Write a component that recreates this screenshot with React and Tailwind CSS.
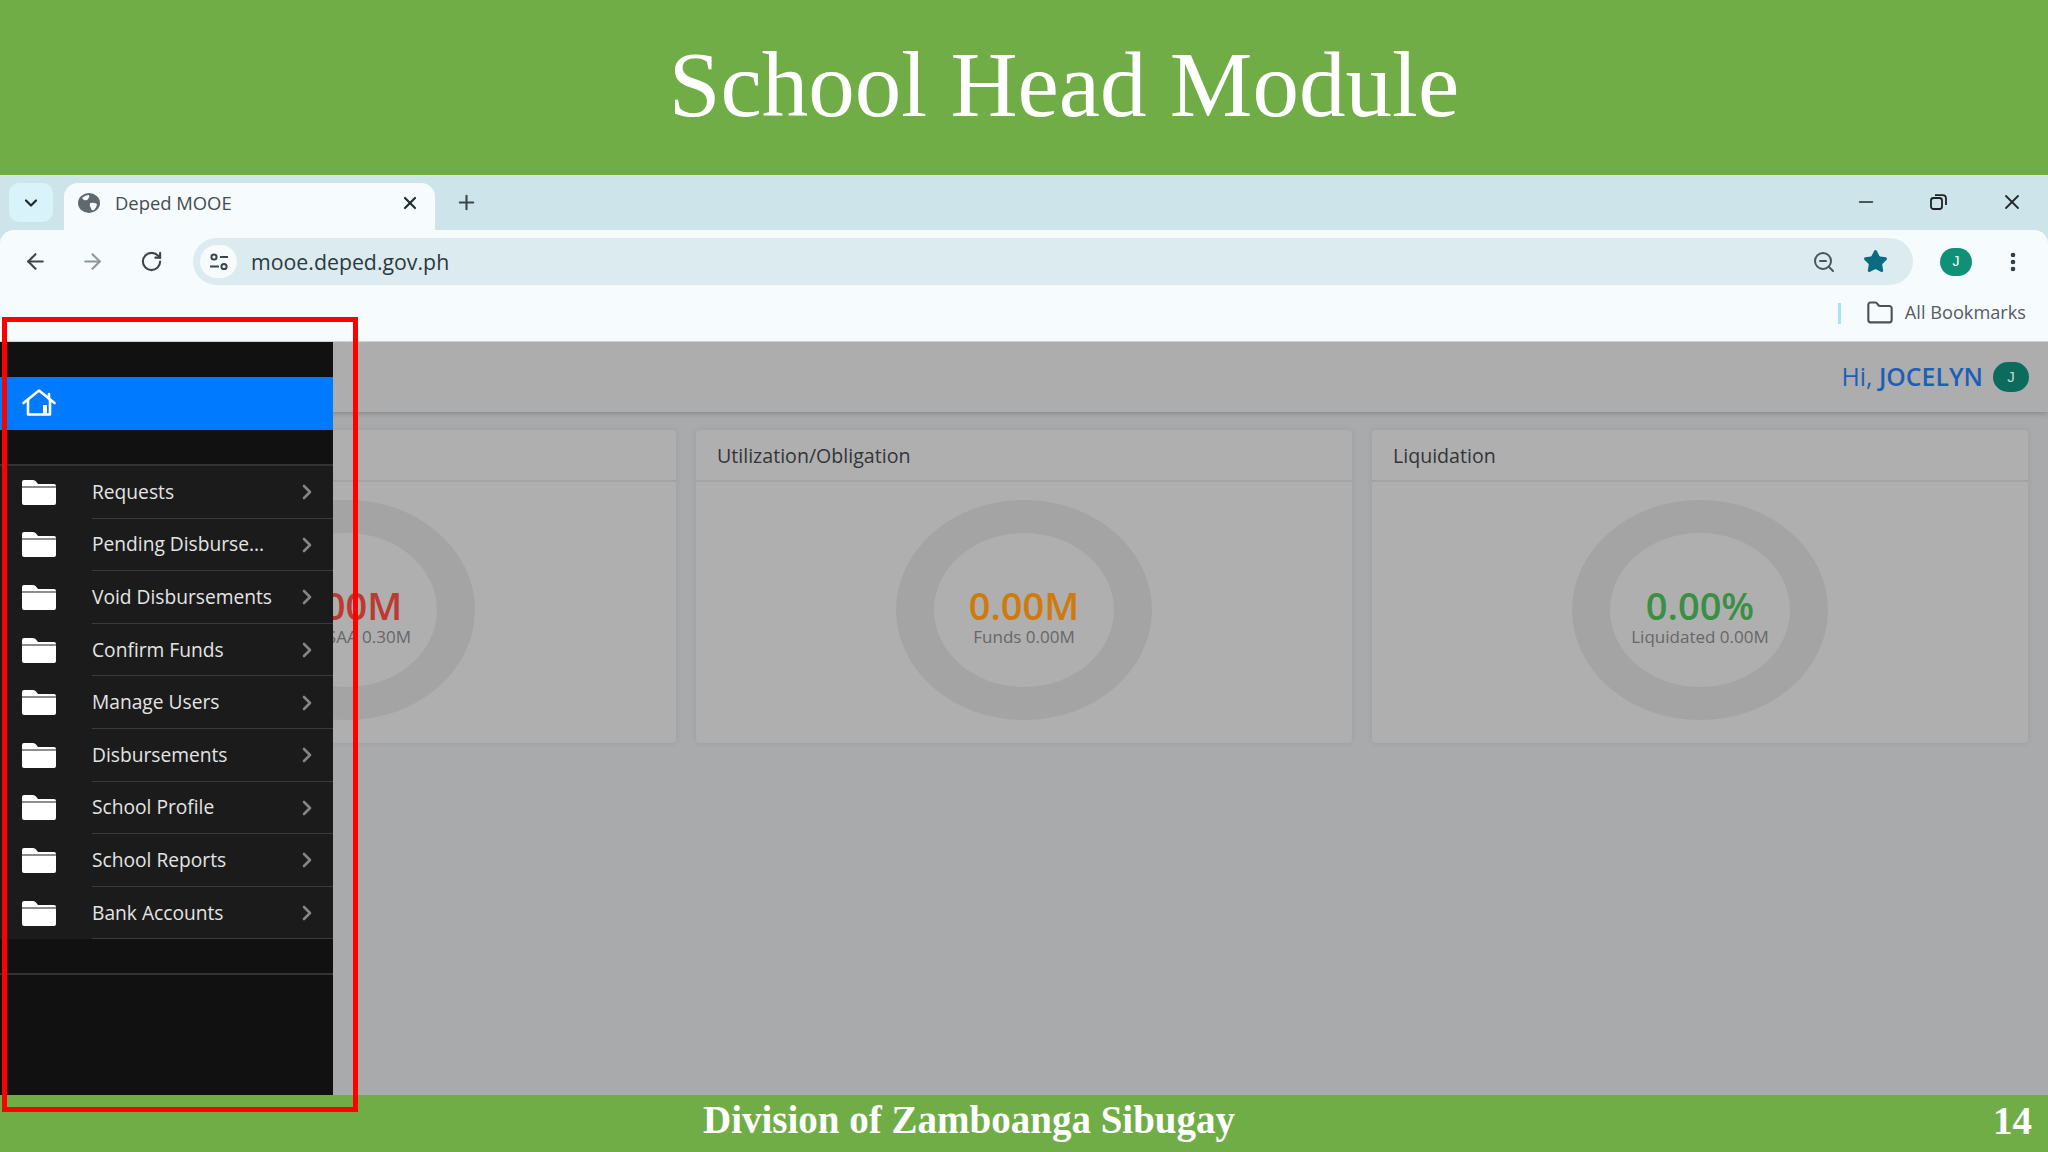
import { ArrowLeft, ArrowRight, RotateCw, Plus, X, ChevronDown, ChevronRight, ZoomOut, Star, EllipsisVertical, Minus, Folder } from "lucide-react";

const menuItems = ["Requests", "Pending Disburse...", "Void Disbursements", "Confirm Funds", "Manage Users", "Disbursements", "School Profile", "School Reports", "Bank Accounts"];

const cards = [
  { title: "Budget", value: "0.00M", sub: "Total SAA 0.30M", color: "text-[#bb3a31]", width: "w-[658px]" },
  { title: "Utilization/Obligation", value: "0.00M", sub: "Funds 0.00M", color: "text-[#d07a0c]", width: "w-[656px]" },
  { title: "Liquidation", value: "0.00%", sub: "Liquidated 0.00M", color: "text-[#3a8f45]", width: "w-[656px]" },
];

function FolderIcon() {
  return (
    <svg width="34" height="25" viewBox="0 0 34 25" className="shrink-0">
      <path d="M0 5V2q0-2 2-2h9q2 0 3 1.5L16 4h16q2 0 2 2v0.5H0z" fill="#fff" />
      <path d="M0 7.5h34V23q0 2-2 2H2q-2 0-2-2z" fill="#fff" />
    </svg>
  );
}

function HomeIcon() {
  return (
    <svg width="34" height="28" viewBox="0 0 34 28" fill="none" stroke="#fff" strokeWidth="2.6" strokeLinejoin="round" strokeLinecap="round">
      <path d="M1.5 14 17 1.5 32.5 14" />
      <path d="M27 5v5" />
      <path d="M6 11v14.5h22V11" />
      <rect x="21" y="16" width="4" height="9" fill="#fff" stroke="none" />
    </svg>
  );
}

function GlobeIcon() {
  return (
    <svg width="22" height="20" viewBox="0 0 22 20" className="shrink-0">
      <ellipse cx="11" cy="10" rx="11" ry="10" fill="#5f6a6e" />
      <path d="M4 5q3-3 7-3 1 2-1 4-1 2-4 1zM12 10q4-1 7 1 0 3-3 6-3 1-3-2-2-2-1-5z" fill="#f6fbfe" />
    </svg>
  );
}

function SliderIcon() {
  return (
    <svg width="20" height="18" viewBox="0 0 20 18" fill="none" stroke="#37474c" strokeWidth="2">
      <circle cx="5" cy="4" r="2.6" />
      <path d="M11 4h8M1 13.5h9" />
      <circle cx="15" cy="13.5" r="2.6" />
    </svg>
  );
}

function RestoreIcon() {
  return (
    <svg width="17" height="16" viewBox="0 0 17 16" fill="none" stroke="#1c2325" strokeWidth="1.8">
      <rect x="1" y="4" width="11" height="11" rx="2.5" />
      <path d="M5 1.2h7.5q3.5 0 3.5 3.5V11" />
    </svg>
  );
}

function SummaryCard({ card }) {
  return (
    <div className={`${card.width} h-[313px] shrink-0 rounded bg-[#afafaf] shadow-[0_0_6px_rgba(0,0,0,0.08)]`}>
      <div className="h-[52px] pl-[21px] pt-[2px] flex items-center border-b-2 border-[#a3a3a5] text-[19.6px] text-[#333538]">{card.title}</div>
      <div className="flex justify-center pt-[18px]">
        <div className="w-[256px] h-[220px] rounded-[50%] border-x-[38px] border-y-[33px] border-[#a4a4a4] flex flex-col items-center pt-[52px]">
          <div className={`text-[38px] leading-[40px] font-semibold whitespace-nowrap ${card.color}`}>{card.value}</div>
          <div className="text-[17px] leading-[22px] mt-[1px] whitespace-nowrap text-[#666769]">{card.sub}</div>
        </div>
      </div>
    </div>
  );
}

export default function App() {
  return (
    <div className="relative w-[2048px] h-[1152px] flex flex-col overflow-hidden bg-[#70ad47] font-['Open_Sans',sans-serif]">
      <header className="h-[175px] shrink-0 flex items-center justify-center pl-[80px] pb-[6px] font-['Liberation_Serif',serif] text-[93px] text-white">
        School Head Module
      </header>

      {/* browser chrome */}
      <div className="shrink-0 bg-[#cde5ea]">
        <div className="h-[55px] flex items-end text-[#20292c]">
          <div className="ml-[9px] mb-[8px] w-[44px] h-[39px] rounded-[10px] bg-[#d8f3f9] flex items-center justify-center">
            <ChevronDown size={20} strokeWidth={2.6} />
          </div>
          <div className="ml-[11px] w-[371px] h-[47px] rounded-t-[14px] bg-[#f6fbfe] flex items-center pl-[14px] pr-[15px] pb-[7px]">
            <GlobeIcon />
            <span className="ml-[15px] text-[18.4px] text-[#454c4f] flex-1">Deped MOOE</span>
            <X size={20} strokeWidth={2.6} />
          </div>
          <div className="ml-[20px] mb-[16px]">
            <Plus size={23} strokeWidth={2.2} className="text-[#3a4649]" />
          </div>
          <div className="ml-auto mb-[16px] flex items-center gap-[53px] pr-[24px]">
            <Minus size={22} strokeWidth={1.8} />
            <RestoreIcon />
            <X size={24} strokeWidth={1.8} />
          </div>
        </div>

        <div className="h-[111px] bg-[#f6fbfe] rounded-tl-[14px] rounded-tr-[14px]">
          <div className="flex items-center h-[63px] text-[#3a4649]">
            <ArrowLeft size={25} strokeWidth={2} className="ml-[23px]" />
            <ArrowRight size={25} strokeWidth={2} className="ml-[32px] text-[#8d989b]" />
            <RotateCw size={23} strokeWidth={2.2} className="ml-[35px]" />
            <div className="ml-[30px] w-[1720px] h-[47px] rounded-full bg-[#dcebef] flex items-center pl-[7px] pr-[25px]">
              <div className="w-[37px] h-[33px] rounded-full bg-[#f6fbfe] flex items-center justify-center">
                <SliderIcon />
              </div>
              <span className="ml-[14px] flex-1 text-[21.3px] text-[#2c3a3f]">mooe.deped.gov.ph</span>
              <ZoomOut size={24} strokeWidth={2} className="mr-[2px] text-[#4a5558]" />
              <Star size={25} fill="#0b6b80" className="ml-[25px] text-[#0b6b80]" />
            </div>
            <div className="ml-[27px] w-[32px] h-[28px] rounded-full bg-[#0e9176] text-white text-[14px] font-['Liberation_Sans',sans-serif] flex items-center justify-center">J</div>
            <EllipsisVertical size={24} strokeWidth={2.6} className="ml-[29px] text-[#2c3a3f]" />
          </div>
          <div className="flex items-center justify-end h-[34px] pr-[22px] mt-[3px]">
            <div className="w-[3px] h-[21px] bg-[#a9e3f2]" />
            <Folder size={28} strokeWidth={1.8} className="ml-[25px] text-[#4a5255]" />
            <span className="ml-[11px] text-[18.2px] text-[#555c5f]">All Bookmarks</span>
          </div>
        </div>
      </div>

      {/* page under the dimmed overlay */}
      <div className="relative flex-1 bg-[#a9aaac] border-t border-[#d8d8d8]">
        <div className="h-[70px] bg-[#adadad] shadow-[0_2px_5px_rgba(0,0,0,0.18)] flex items-center justify-end pr-[19px]">
          <span className="text-[24.8px] text-[#1d5fb8]">Hi, <span className="font-semibold">JOCELYN</span></span>
          <div className="ml-[10px] w-[36px] h-[30px] rounded-full bg-[#0b6b5c] text-[#c8d8d4] text-[15px] font-['Liberation_Sans',sans-serif] flex items-center justify-center">J</div>
        </div>
        <div className="flex gap-5 pl-[18px] pt-[18px]">
          {cards.map((card) => (
            <SummaryCard key={card.title} card={card} />
          ))}
        </div>

        {/* sidebar drawer sits over the page */}
        <aside className="absolute inset-y-0 left-0 w-[333px] bg-[#111111] pt-[35px] flex flex-col">
          <div className="h-[53px] shrink-0 bg-[#007bff] flex items-center pl-[22px] pb-[2px]">
            <HomeIcon />
          </div>
          <div className="h-[36px] shrink-0 border-b-2 border-[#333]" />
          {menuItems.map((item) => (
            <div key={item} className="relative h-[52.6px] shrink-0 bg-[#1b1b1b] flex items-center pl-[22px] pr-[14px]">
              <FolderIcon />
              <span className="ml-[36px] flex-1 text-[19.2px] whitespace-nowrap text-[#e4e4e4]">{item}</span>
              <ChevronRight size={24} strokeWidth={2.6} className="text-[#858585]" />
              <div className="absolute bottom-0 left-[92px] right-0 h-px bg-[#3a3a3a]" />
            </div>
          ))}
          <div className="h-[36px] shrink-0 border-b-2 border-[#333]" />
        </aside>
      </div>

      <footer className="relative h-[57px] shrink-0 flex items-center font-['Liberation_Serif',serif] font-bold text-white pb-[7px]">
        <span className="ml-[703px] text-[39px]">Division of Zamboanga Sibugay</span>
        <span className="absolute right-[16px] top-[-3px] text-[39px]">14</span>
      </footer>

      {/* red annotation box */}
      <div className="absolute left-[2px] top-[317px] w-[356px] h-[795px] border-[5px] border-[#ff0000]" />
    </div>
  );
}
